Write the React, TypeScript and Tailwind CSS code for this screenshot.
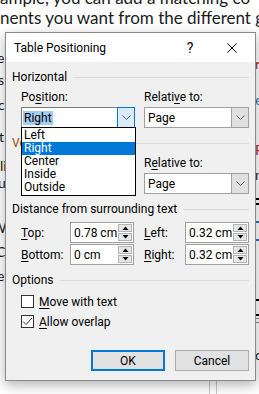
import React from "react";

function Chevron() {
  return (
    <svg width="9" height="5" viewBox="0 0 9 5" className="block">
      <path d="M0.5 0.5 L4.5 4.5 L8.5 0.5" fill="none" stroke="#606060" strokeWidth="1" />
    </svg>
  );
}

function GroupHeader({ label, color }: { label: string; color?: string }) {
  return (
    <div className="flex items-center h-[16px] pl-[6px] pr-[6px]">
      <span className={color === "orange" ? "text-[#9c4a00]" : ""}>{label}</span>
      <div className="flex-1 h-px bg-[#dcdcdc] ml-[6px]" />
    </div>
  );
}

function PageSelect() {
  return (
    <div className="w-[105px] h-[21px] border border-[#a0a0a0] bg-white flex items-stretch">
      <div className="flex-1 flex items-center pl-[3px]">Page</div>
      <div className="w-[17px] bg-[#e0e0e0] border-l border-[#a0a0a0] flex items-center justify-center">
        <Chevron />
      </div>
    </div>
  );
}

function Up() {
  return (
    <svg width="7" height="4" viewBox="0 0 7 4" className="block">
      <path d="M0.5 4 L3.5 0.5 L6.5 4 Z" fill="#000" />
    </svg>
  );
}
function Down() {
  return (
    <svg width="7" height="4" viewBox="0 0 7 4" className="block">
      <path d="M0.5 0 L3.5 3.5 L6.5 0 Z" fill="#000" />
    </svg>
  );
}

function Spin({ value }: { value: string }) {
  return (
    <div className="w-[64px] h-[21px] border border-[#a0a0a0] bg-white flex items-stretch">
      <div className="flex-1 flex items-center pl-[3px]">{value}</div>
      <div className="w-[14px] my-[1px] mr-[1px] flex flex-col gap-[1px]">
        <div className="flex-1 bg-[#e6e6e6] border border-[#b4b4b4] flex items-center justify-center">
          <Up />
        </div>
        <div className="flex-1 bg-[#e6e6e6] border border-[#b4b4b4] flex items-center justify-center">
          <Down />
        </div>
      </div>
    </div>
  );
}

function Dialog() {
  return (
    <div className="absolute left-[5px] top-[32px] w-[251px] h-[349px] border border-[#8a8a8a] bg-[#f0f0f0] shadow-[0_4px_12px_rgba(0,0,0,0.3)] font-['Roboto',sans-serif] text-[12px] leading-[16px] text-black flex flex-col">
      {/* title bar */}
      <div className="h-[29px] shrink-0 bg-white flex items-center">
        <span className="ml-[8px]">Table Positioning</span>
        <span className="ml-auto w-[10px] text-[14px] text-center">?</span>
        <svg width="10" height="10" viewBox="0 0 10 10" className="block ml-[32px] mr-[18px]">
          <path d="M0.5 0.5 L9.5 9.5 M9.5 0.5 L0.5 9.5" stroke="#000" strokeWidth="1" />
        </svg>
      </div>

      {/* body */}
      <div className="flex-1 flex flex-col">
        <div className="mt-[7px]">
          <GroupHeader label="Horizontal" />
        </div>
        <div className="flex pl-[15px] mt-[4px] h-[16px]">
          <div className="w-[114px]">
            Po<u className="underline-offset-2">s</u>ition:
          </div>
          <div className="w-[105px] ml-[9px]">
            Relati<u className="underline-offset-2">v</u>e to:
          </div>
        </div>
        <div className="flex pl-[15px] mt-[2px]">
          <div className="w-[114px] h-[21px] flex items-stretch bg-white">
            <div className="flex-1 border-y border-l border-[#7a7a7a] flex items-center pl-[1px]">
              <span className="bg-[#a2cdf1] px-[1px] leading-[14px]">Right</span>
            </div>
            <div className="w-[18px] border border-[#0078d7] bg-[#d9ebf9] flex items-center justify-center">
              <Chevron />
            </div>
          </div>
          <div className="ml-[9px]">
            <PageSelect />
          </div>
        </div>

        <div className="mt-[7px]">
          <GroupHeader label="Vertical" color="orange" />
        </div>
        <div className="flex pl-[15px] mt-[4px] h-[16px]">
          <div className="w-[114px]" />
          <div className="w-[105px] ml-[9px]">
            R<u className="underline-offset-2">e</u>lative to:
          </div>
        </div>
        <div className="flex pl-[15px] mt-[2px]">
          <div className="w-[114px] h-[21px]" />
          <div className="ml-[9px]">
            <PageSelect />
          </div>
        </div>

        <div className="mt-[7px]">
          <GroupHeader label="Distance from surrounding text" />
        </div>
        <div className="flex pl-[15px] mt-[5px]">
          <div className="w-[113px] flex items-center justify-between">
            <span>
              <u className="underline-offset-2">T</u>op:
            </span>
            <Spin value="0.78 cm" />
          </div>
          <div className="w-[105px] ml-[10px] flex items-center justify-between">
            <span>
              <u className="underline-offset-2">L</u>eft:
            </span>
            <Spin value="0.32 cm" />
          </div>
        </div>
        <div className="flex pl-[15px] mt-[1px]">
          <div className="w-[113px] flex items-center justify-between">
            <span>
              <u className="underline-offset-2">B</u>ottom:
            </span>
            <Spin value="0 cm" />
          </div>
          <div className="w-[105px] ml-[10px] flex items-center justify-between">
            <span>
              <u className="underline-offset-2">R</u>ight:
            </span>
            <Spin value="0.32 cm" />
          </div>
        </div>

        <div className="mt-[7px]">
          <GroupHeader label="Options" />
        </div>
        <div className="flex items-center pl-[15px] mt-[7px] h-[13px]">
          <div className="w-[13px] h-[13px] border border-[#333] bg-white" />
          <span className="ml-[5px]">
            <u className="underline-offset-2">M</u>ove with text
          </span>
        </div>
        <div className="flex items-center pl-[15px] mt-[7px] h-[13px]">
          <div className="w-[13px] h-[13px] border border-[#333] bg-white flex items-center justify-center">
            <svg width="11" height="9" viewBox="0 0 11 9" className="block">
              <path d="M1 4.5 L4 7.5 L10 1" fill="none" stroke="#333" strokeWidth="1" />
            </svg>
          </div>
          <span className="ml-[5px]">
            <u className="underline-offset-2">A</u>llow overlap
          </span>
        </div>

        <div className="flex justify-end gap-[10px] pr-[6px] mt-[22px]">
          <div className="w-[74px] h-[21px] border-2 border-[#0078d7] bg-[#e1e1e1] flex items-center justify-center">
            OK
          </div>
          <div className="w-[74px] h-[21px] border border-[#adadad] bg-[#e1e1e1] flex items-center justify-center">
            Cancel
          </div>
        </div>
      </div>

      {/* open dropdown list */}
      <div className="absolute left-[15px] top-[94px] w-[115px] h-[69px] border border-black bg-white py-[1px] flex flex-col leading-[13px]">
        <div className="h-[13px] flex items-center pl-[2px]">Left</div>
        <div className="h-[13px] flex items-center pl-[2px] bg-[#0078d7] text-white">Right</div>
        <div className="h-[13px] flex items-center pl-[2px]">Center</div>
        <div className="h-[13px] flex items-center pl-[2px]">Inside</div>
        <div className="h-[13px] flex items-center pl-[2px]">Outside</div>
      </div>
    </div>
  );
}

export default function App() {
  return (
    <div className="relative w-[259px] h-[394px] overflow-hidden bg-white">
      <div className="flex flex-col h-[394px]">
        <div className="h-[32px] shrink-0 overflow-hidden font-['Lato',sans-serif] text-[17px] leading-[20px] text-[#1a1a1a] whitespace-nowrap">
          <div className="-mt-[12px]">ample, you can add a matching co</div>
          <div>nents you want from the different g</div>
        </div>
        <div className="h-[348px] shrink-0 flex justify-between font-['Lato',sans-serif] text-[14px] leading-[16px] text-[#1a1a1a] whitespace-nowrap">
          <div className="w-[5px] overflow-hidden flex flex-col">
            <div className="h-[16px] mt-[18px] -ml-[3px]">e</div>
            <div className="h-[16px] mt-[6px] -ml-[2px]">s</div>
            <div className="h-[16px] mt-[9px] -ml-[2px]">c</div>
            <div className="h-[16px] mt-[16px] -ml-[1px]">t</div>
            <div className="h-[16px] mt-[13px]">li</div>
            <div className="h-[16px] mt-[1px] -ml-[2px]">u</div>
            <div className="h-[16px] mt-[29px] -ml-[8px]">W</div>
            <div className="h-[16px] mt-[8px] -ml-[4px]">C</div>
            <div className="h-[16px] mt-[8px] -ml-[3px]">e</div>
          </div>
          <div className="w-[4px] overflow-hidden flex flex-col">
            <div className="h-[16px] mt-[24px] text-[#b01c1c]">r</div>
            <div className="h-[16px] mt-[20px] text-[#2e74b5]">e</div>
            <div className="h-[16px] mt-[34px] text-[#b01c1c]">P</div>
            <div className="h-[16px] mt-[9px]">m</div>
            <div className="h-[2px] mt-[15px] bg-black" />
            <div className="h-[2px] mt-[3px] bg-black" />
            <div className="h-[2px] mt-[16px] bg-[#2e74b5]" />
            <div className="h-[2px] mt-[16px] bg-[#2e74b5]" />
            <div className="h-[2px] mt-[58px] bg-black" />
            <div className="h-[2px] mt-[13px] bg-black" />
            <div className="h-px mt-[2px] bg-[#888]" />
            <div className="h-px mt-[3px] bg-[#888]" />
            <div className="h-[16px] mt-[24px]">c</div>
          </div>
        </div>
        <div className="h-[14px] shrink-0 flex">
          <div className="ml-[209px] w-px h-full bg-[#c8c8c8]" />
          <div className="ml-[6px] w-px h-full bg-[#c8c8c8]" />
        </div>
      </div>
      <Dialog />
    </div>
  );
}
